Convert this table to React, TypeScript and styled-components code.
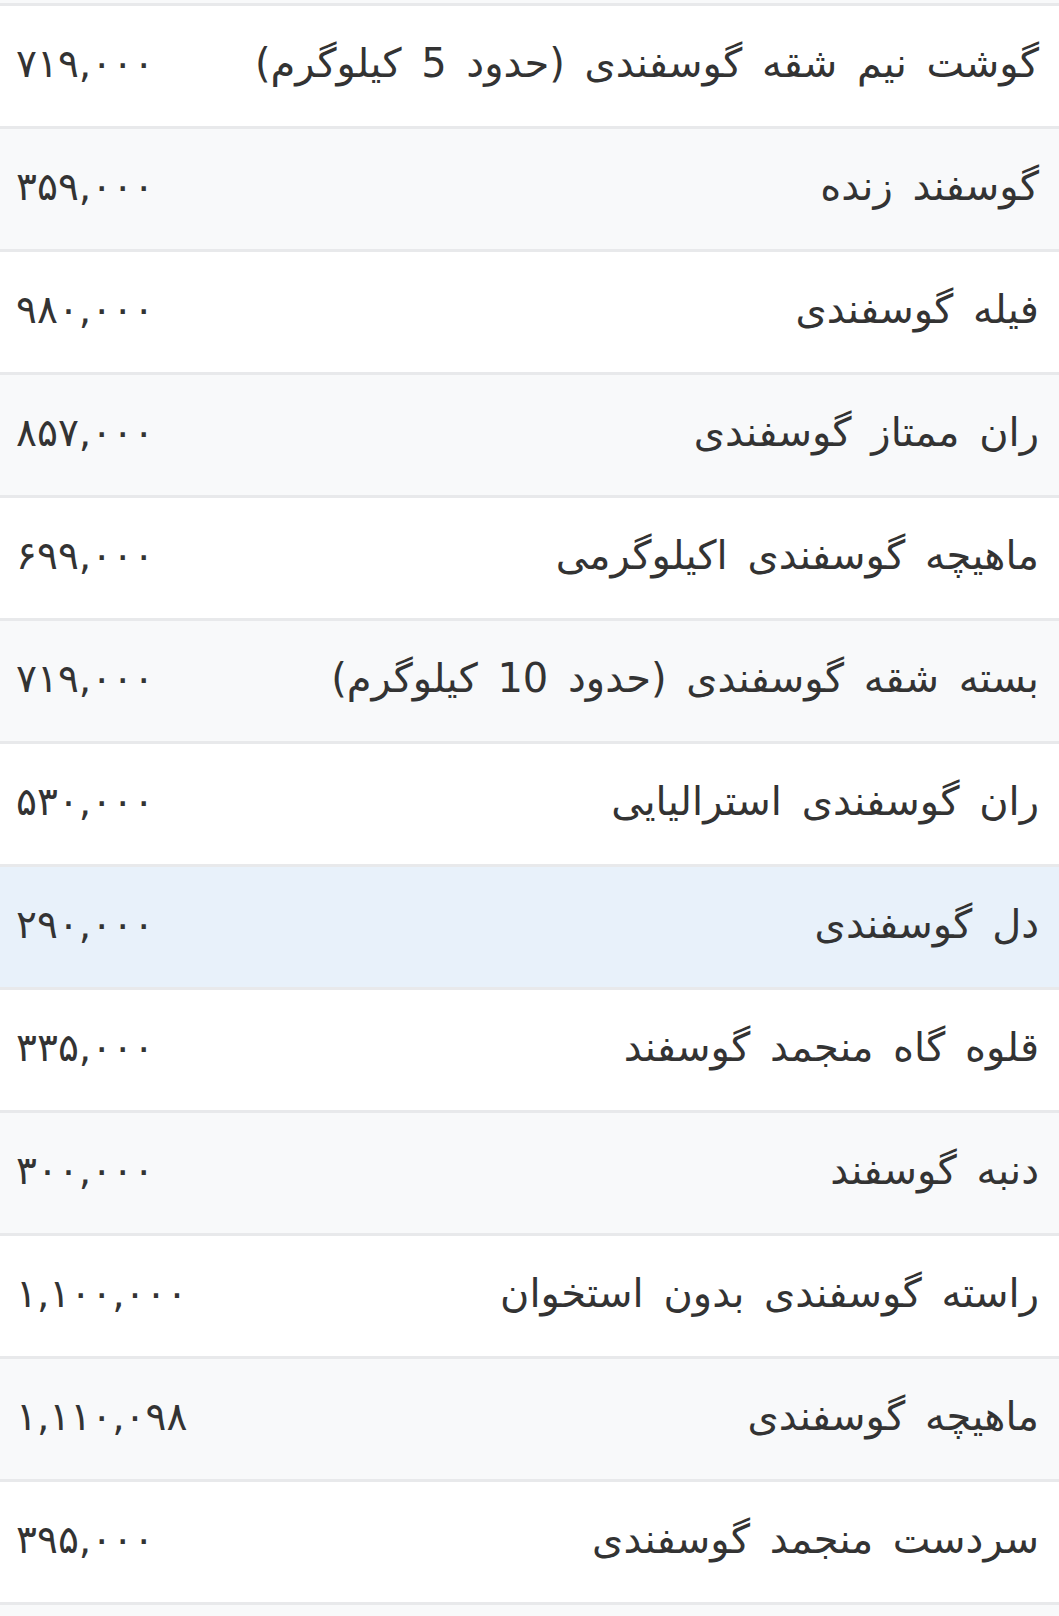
import React from 'react';
import styled, { createGlobalStyle } from 'styled-components';

const GlobalStyle = createGlobalStyle`
    html, body {
        margin: 0;
        padding: 0;
        background: #f8f9fa;
    }
`;

const Wrapper = styled.div`
    direction: rtl;
    background: #f8f9fa;
    padding-top: 3px;
    font-family: "DejaVu Sans", "Noto Sans", sans-serif;
    color: #333333;
`;

const Row = styled.div<{ $striped: boolean; $active: boolean }>`
    display: flex;
    align-items: center;
    justify-content: space-between;
    box-sizing: border-box;
    height: 123px;
    border-top: 3px solid #e8e9eb;
    padding: 0 20px 6px 16px;
    background: ${(p) => (p.$active ? '#e8f1fa' : p.$striped ? '#f8f9fa' : '#ffffff')};
    &:last-child {
        height: 126px;
        border-bottom: 3px solid #e8e9eb;
    }
`;

const Name = styled.span`
    font-size: 40px;
    word-spacing: 7px;
    white-space: nowrap;
`;

const Price = styled.span`
    font-size: 39px;
    letter-spacing: 1px;
    direction: ltr;
    white-space: nowrap;
`;

const items = [
    { name: 'گوشت نیم شقه گوسفندی (حدود 5 کیلوگرم)', price: '۷۱۹,۰۰۰' },
    { name: 'گوسفند زنده', price: '۳۵۹,۰۰۰' },
    { name: 'فیله گوسفندی', price: '۹۸۰,۰۰۰' },
    { name: 'ران ممتاز گوسفندی', price: '۸۵۷,۰۰۰' },
    { name: 'ماهیچه گوسفندی اکیلوگرمی', price: '۶۹۹,۰۰۰' },
    { name: 'بسته شقه گوسفندی (حدود 10 کیلوگرم)', price: '۷۱۹,۰۰۰' },
    { name: 'ران گوسفندی استرالیایی', price: '۵۳۰,۰۰۰' },
    { name: 'دل گوسفندی', price: '۲۹۰,۰۰۰' },
    { name: 'قلوه گاه منجمد گوسفند', price: '۳۳۵,۰۰۰' },
    { name: 'دنبه گوسفند', price: '۳۰۰,۰۰۰' },
    { name: 'راسته گوسفندی بدون استخوان', price: '۱,۱۰۰,۰۰۰' },
    { name: 'ماهیچه گوسفندی', price: '۱,۱۱۰,۰۹۸' },
    { name: 'سردست منجمد گوسفندی', price: '۳۹۵,۰۰۰' },
];

const App = () => {
    return (
        <>
            <GlobalStyle />
            <Wrapper>
                {items.map((item, i) => (
                    <Row key={i} $striped={i % 2 === 1} $active={i === 7}>
                        <Name>{item.name}</Name>
                        <Price>{item.price}</Price>
                    </Row>
                ))}
            </Wrapper>
        </>
    );
};

export default App;
